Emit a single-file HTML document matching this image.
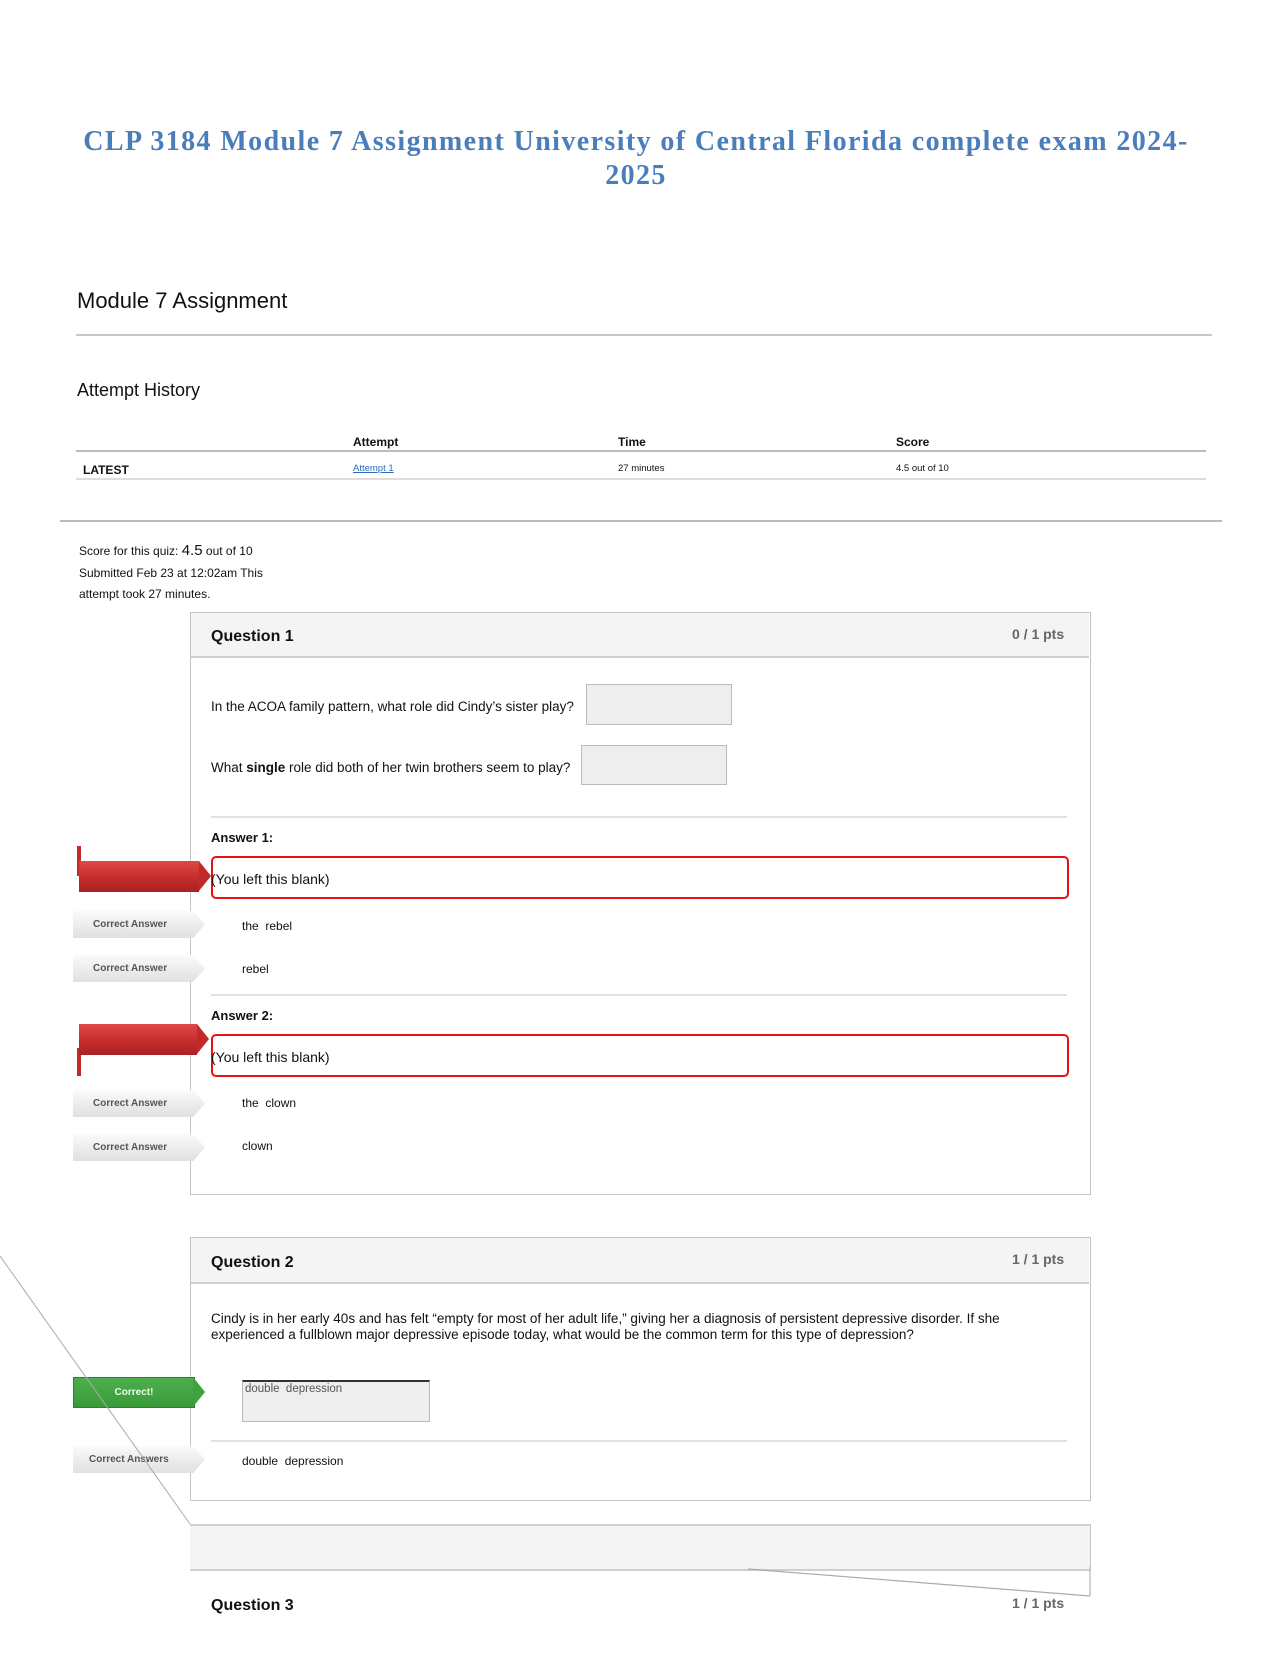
<!DOCTYPE html>
<html><head><meta charset="utf-8"><style>
body{margin:0;width:1280px;height:1656px;position:relative;background:#fff;font-family:"Liberation Sans",sans-serif;color:#111;overflow:hidden}
.a{position:absolute;white-space:nowrap}
.t{position:absolute;left:0;width:1272px;text-align:center;font-family:"Liberation Serif",serif;font-weight:bold;color:#4a7ebb;font-size:28px;line-height:34px;letter-spacing:1.4px;white-space:nowrap}
.hl{position:absolute;height:2px;background:#c8c8c8}
.box{position:absolute;border:1.5px solid #c4c4c4;background:#fff}
.hd{position:absolute;background:#f4f4f4;border-bottom:2px solid #cfcfcf}
.q{font-weight:bold;font-size:16px}
.pts{font-weight:bold;font-size:14px;color:#666}
.in{position:absolute;background:#eee;border:1px solid #bbb}
.red{position:absolute;border:2px solid #e81010;border-radius:5px}
.ca{position:absolute;width:132px;height:27px;background:linear-gradient(#fafafa,#e0e0e0);clip-path:polygon(0 0,91% 0,100% 50%,91% 100%,0 100%);font-size:10px;font-weight:bold;color:#555;line-height:27px;text-indent:20px;filter:drop-shadow(0 0 0.6px #888)}
.arr{position:absolute;height:31px;background:linear-gradient(#e04848,#c22a2a 60%,#a82222)}
.arr:after{content:"";position:absolute;right:-12px;top:0;border-left:12px solid #c22a2a;border-top:15.5px solid transparent;border-bottom:15.5px solid transparent}
.s13{font-size:13.5px}
.s12{font-size:12px}
</style></head><body>
<div class="t" style="top:125px">CLP 3184 Module 7 Assignment University of Central Florida complete exam 2024-</div>
<div class="t" style="top:159px">2025</div>

<div class="a" style="left:77px;top:288px;font-size:22px">Module 7 Assignment</div>
<div class="hl" style="left:76px;top:334px;width:1136px"></div>
<div class="a" style="left:77px;top:380px;font-size:18px">Attempt History</div>

<div class="a" style="left:353px;top:435px;font-size:12px;font-weight:bold">Attempt</div>
<div class="a" style="left:618px;top:435px;font-size:12px;font-weight:bold">Time</div>
<div class="a" style="left:896px;top:435px;font-size:12px;font-weight:bold">Score</div>
<div class="hl" style="left:76px;top:450px;width:1130px;background:#bbb"></div>
<div class="a" style="left:83px;top:463px;font-size:12px;font-weight:bold">LATEST</div>
<div class="a" style="left:353px;top:463px;font-size:9.5px;color:#2a6bc0;text-decoration:underline">Attempt 1</div>
<div class="a" style="left:618px;top:463px;font-size:9.5px">27 minutes</div>
<div class="a" style="left:896px;top:463px;font-size:9.5px">4.5 out of 10</div>
<div class="hl" style="left:76px;top:478px;width:1130px;background:#ddd"></div>
<div class="hl" style="left:60px;top:520px;width:1162px;background:#bbb"></div>

<div class="a" style="left:79px;top:542px;font-size:12px">Score for this quiz: <span style="font-size:15px">4.5</span> out of 10</div>
<div class="a" style="left:79px;top:566px;font-size:12px">Submitted Feb 23 at 12:02am This</div>
<div class="a" style="left:79px;top:587px;font-size:12px">attempt took 27 minutes.</div>

<!-- Q1 -->
<div class="box" style="left:190px;top:612px;width:899px;height:581px"></div>
<div class="hd" style="left:191px;top:613px;width:898px;height:43px"></div>
<div class="a q" style="left:211px;top:628px">Question 1</div>
<div class="a pts" style="left:1012px;top:626px">0 / 1 pts</div>
<div class="in" style="left:586px;top:684px;width:144px;height:39px"></div>
<div class="a s13" style="left:211px;top:699px">In the ACOA family pattern, what role did Cindy’s sister play?</div>
<div class="in" style="left:581px;top:745px;width:144px;height:38px"></div>
<div class="a s13" style="left:211px;top:760px">What <b>single</b> role did both of her twin brothers seem to play?</div>
<div class="hl" style="left:211px;top:816px;width:856px;background:#e2e2e2"></div>
<div class="a" style="left:211px;top:830px;font-size:13px;font-weight:bold">Answer 1:</div>
<div class="red" style="left:211px;top:856px;width:854px;height:39px"></div>
<div class="a" style="left:211px;top:871px;font-size:14px">(You left this blank)</div>
<div style="position:absolute;left:77px;top:846px;width:4px;height:30px;background:#c22a2a"></div>
<div class="arr" style="left:79px;top:861px;width:120px"></div>
<div class="ca" style="left:73px;top:911px">Correct Answer</div>
<div class="a s12" style="left:242px;top:919px">the &nbsp;rebel</div>
<div class="ca" style="left:73px;top:955px">Correct Answer</div>
<div class="a s12" style="left:242px;top:962px">rebel</div>
<div class="hl" style="left:211px;top:994px;width:856px;background:#e2e2e2"></div>
<div class="a" style="left:211px;top:1008px;font-size:13px;font-weight:bold">Answer 2:</div>
<div class="red" style="left:211px;top:1034px;width:854px;height:39px"></div>
<div class="a" style="left:211px;top:1049px;font-size:14px">(You left this blank)</div>
<div style="position:absolute;left:77px;top:1048px;width:4px;height:28px;background:#c22a2a"></div>
<div class="arr" style="left:79px;top:1024px;width:118px"></div>
<div class="ca" style="left:73px;top:1090px">Correct Answer</div>
<div class="a s12" style="left:242px;top:1096px">the &nbsp;clown</div>
<div class="ca" style="left:73px;top:1134px">Correct Answer</div>
<div class="a s12" style="left:242px;top:1139px">clown</div>

<!-- Q2 -->
<div class="box" style="left:190px;top:1237px;width:899px;height:262px"></div>
<div class="hd" style="left:191px;top:1238px;width:898px;height:44px"></div>
<div class="a q" style="left:211px;top:1254px">Question 2</div>
<div class="a pts" style="left:1012px;top:1251px">1 / 1 pts</div>
<div class="a s13" style="left:211px;top:1311px;line-height:16px">Cindy is in her early 40s and has felt “empty for most of her adult life,” giving her a diagnosis of persistent depressive disorder. If she<br>experienced a fullblown major depressive episode today, what would be the common term for this type of depression?</div>
<div class="in" style="left:242px;top:1380px;width:186px;height:39px;border-top:2px solid #333"></div>
<div class="a" style="left:245px;top:1383px;font-size:11.5px;color:#555">double &nbsp;depression</div>
<div style="position:absolute;left:73px;top:1377px;width:120px;height:29px;background:linear-gradient(#4caf4c,#3a9a3a);border:1px solid #2f7f2f;color:#e8ffe8;font-size:10px;font-weight:bold;text-align:center;line-height:29px">Correct!</div>
<div style="position:absolute;left:193px;top:1377px;border-left:12px solid #3ea23e;border-top:15px solid transparent;border-bottom:15px solid transparent"></div>
<div class="hl" style="left:211px;top:1440px;width:856px;background:#e2e2e2"></div>
<div class="ca" style="left:73px;top:1446px;text-indent:16px">Correct Answers</div>
<div class="a s12" style="left:242px;top:1454px">double &nbsp;depression</div>

<!-- Q3 -->
<div style="position:absolute;left:190px;top:1524px;width:900px;height:43px;background:#f4f4f4;border-top:2px solid #cfcfcf;border-right:1.5px solid #c4c4c4;border-bottom:2px solid #cfcfcf"></div>
<div class="a q" style="left:211px;top:1597px">Question 3</div>
<div class="a pts" style="left:1012px;top:1595px">1 / 1 pts</div>

<svg style="position:absolute;left:0;top:0" width="1280" height="1656">
<line x1="0" y1="1256" x2="190" y2="1524" stroke="#aaa" stroke-width="1"/>
<line x1="748" y1="1569" x2="1090" y2="1596" stroke="#aaa" stroke-width="1.2"/>
<line x1="1090" y1="1567" x2="1090" y2="1596" stroke="#c4c4c4" stroke-width="1.5"/>
</svg>
</body></html>
